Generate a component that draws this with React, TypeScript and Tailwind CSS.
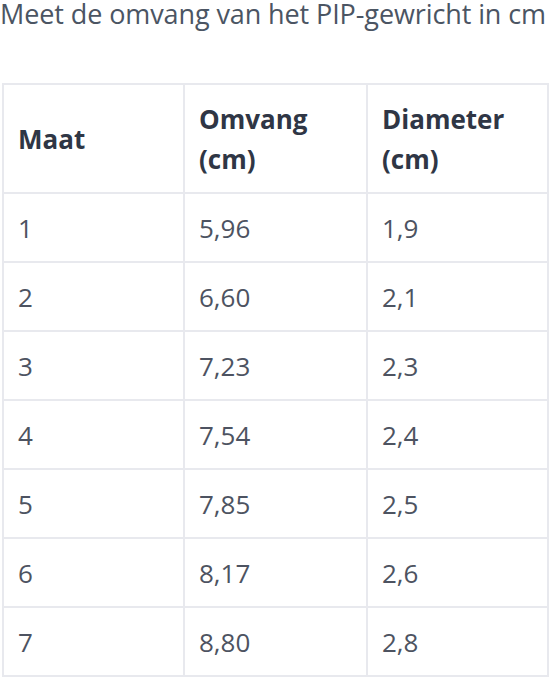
export default function App() {
  const rows = [
    ["1", "5,96", "1,9"],
    ["2", "6,60", "2,1"],
    ["3", "7,23", "2,3"],
    ["4", "7,54", "2,4"],
    ["5", "7,85", "2,5"],
    ["6", "8,17", "2,6"],
    ["7", "8,80", "2,8"],
  ];
  return (
    <div className="w-[550px] h-[677px] bg-white overflow-hidden" style={{ fontFamily: '"Open Sans", sans-serif' }}>
      <p className="text-[27px] leading-[26px] pt-[1px] text-[#4b5563] whitespace-nowrap tracking-[-0.1px]">
        Meet de omvang van het PIP-gewricht in cm
      </p>
      <table className="mt-[56px] ml-[2px] w-[545px] border-collapse table-fixed">
        <colgroup>
          <col className="w-[181px]" />
          <col className="w-[183px]" />
          <col className="w-[181px]" />
        </colgroup>
        <thead>
          <tr className="h-[109px]">
            {["Maat", "Omvang (cm)", "Diameter (cm)"].map((h) => (
              <th
                key={h}
                className="border-2 border-[#e8e9ee] text-left align-middle px-[14px] text-[26px] leading-[40px] font-bold text-[#2f3645]"
              >
                {h}
              </th>
            ))}
          </tr>
        </thead>
        <tbody>
          {rows.map((r) => (
            <tr key={r[0]} className="h-[69px]">
              {r.map((c, i) => (
                <td
                  key={i}
                  className="border-2 border-[#e8e9ee] align-middle px-[14px] text-[26px] leading-[34px] text-[#4d5361]"
                >
                  {c}
                </td>
              ))}
            </tr>
          ))}
        </tbody>
      </table>
    </div>
  );
}
